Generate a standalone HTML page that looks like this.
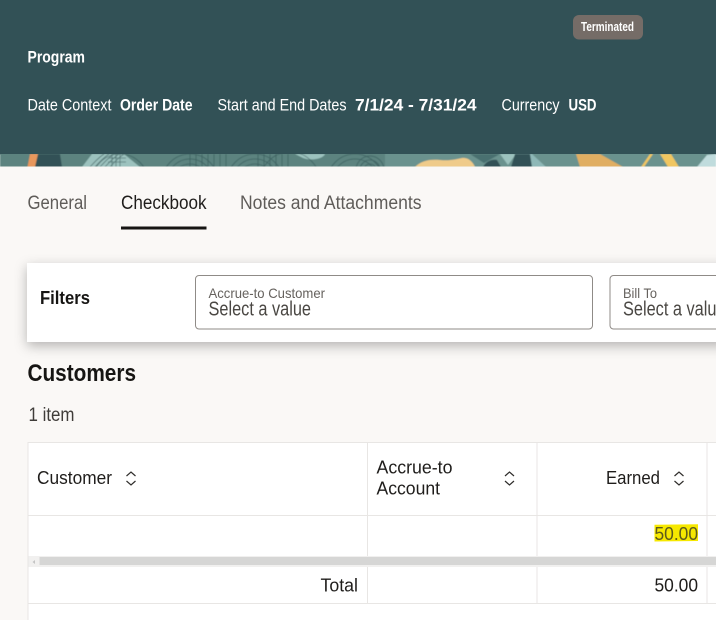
<!DOCTYPE html>
<html><head><meta charset="utf-8"><style>
html,body{margin:0;padding:0;width:716px;height:620px;overflow:hidden;background:#faf8f6}
svg{display:block}
text{font-family:"Liberation Sans",sans-serif}
.w{fill:#fff}
.t{fill:#1f1d1b;font-size:18px}
</style></head><body>
<svg width="716" height="620" viewBox="0 0 716 620" xmlns="http://www.w3.org/2000/svg">
<defs>
<filter id="s" x="-5%" y="-30%" width="110%" height="170%"><feDropShadow dx="0" dy="4" stdDeviation="6" flood-color="#000" flood-opacity=".28"/></filter>
<filter id="b"><feGaussianBlur stdDeviation=".45"/></filter>
<clipPath id="band"><rect x="0" y="154" width="716" height="12.500"/></clipPath>
</defs>
<rect width="716" height="620" fill="#faf8f6"/>
<rect width="716" height="154.500" fill="#325156"/>

<g clip-path="url(#band)"><g filter="url(#b)">
<rect y="152" width="716" height="17" fill="#5b837f"/>
<rect x="385" y="152" width="331" height="17" fill="#6b928e"/>
<path d="M30 154h8.500l-3 13h-8z" fill="#e8975c"/>
<path d="M38 154h22l2 13H35z" fill="#325156"/>
<path d="M92 154h32l16 13H82z" fill="#9cc2be"/>
<path d="M295 154h30c-2 5-14 7-22 4z" fill="#9cc2be"/>
<g fill="none" stroke="#2e4f50" stroke-width=".8" opacity=".65">
<path d="M90 167q8-9 14-13M95 167q8-9 14-13M100 167q8-9 14-13M105 167q8-9 14-13M110 167q8-9 14-13"/>
<path d="M112 154v13M116 154v13M120 154v13M108 158h18M108 162h18"/>
<circle cx="120" cy="182" r="28"/><circle cx="190" cy="182" r="28"/><circle cx="190" cy="182" r="23"/><circle cx="190" cy="182" r="18"/>
<circle cx="255" cy="182" r="28"/><circle cx="255" cy="182" r="23"/><circle cx="255" cy="182" r="18"/>
<circle cx="290" cy="182" r="30"/><circle cx="355" cy="182" r="28"/><circle cx="355" cy="182" r="23"/><circle cx="370" cy="170" r="14"/><circle cx="370" cy="170" r="10"/><circle cx="370" cy="170" r="6"/>
<path d="M190 154v13M196 154v13M202 154v13M208 154v13M214 154v13M220 154v13M226 154v13M258 154v13M264 154v13M270 154v13M276 154v13M282 154v13M288 154v13"/>
</g>
<path d="M415 167c6-6 14-8 25-7s16-1 22-2 11 4 13 9z" fill="#efcb8a"/>
<path d="M470 154h30l-16 9z" fill="#487070"/>
<path d="M483 167c3-6 9-8 14-7l4 7z" fill="#325156"/>
<path d="M500 154h16l-8 11z" fill="#9cc2be"/>
<path d="M515 154h15l4 13h-23z" fill="#325156"/>
<path d="M530 154h2l14 13h-14z" fill="#8eb8b7"/>
<path d="M576 154h24l23 13h-43z" fill="#e0ae62"/>
<path d="M650 154h3l-9 13h-3zM660 154h11l8 13h-11z" fill="#f0c661"/>
<path d="M716 154v13h-19l10-12z" fill="#c0dcdd"/>
</g></g>

<rect x="573" y="15" width="70" height="24.500" rx="6" fill="#756c67"/>
<text x="581" y="31" class="w" font-size="13" font-weight="700" textLength="53" lengthAdjust="spacingAndGlyphs">Terminated</text>
<text x="27.500" y="62.500" class="w" font-size="17" font-weight="700" textLength="57.500" lengthAdjust="spacingAndGlyphs">Program</text>
<g font-size="17">
<text x="27.500" y="110.500" class="w" textLength="84" lengthAdjust="spacingAndGlyphs">Date Context</text>
<text x="120" y="110.500" class="w" font-weight="700" textLength="72.500" lengthAdjust="spacingAndGlyphs">Order Date</text>
<text x="217.500" y="110.500" class="w" textLength="129" lengthAdjust="spacingAndGlyphs">Start and End Dates</text>
<text x="355" y="110.500" class="w" font-weight="700" textLength="121.500" lengthAdjust="spacingAndGlyphs">7/1/24 - 7/31/24</text>
<text x="501.500" y="110.500" class="w" textLength="58" lengthAdjust="spacingAndGlyphs">Currency</text>
<text x="568.500" y="110.500" class="w" font-weight="700" textLength="28" lengthAdjust="spacingAndGlyphs">USD</text>
</g>

<text x="27.500" y="209" font-size="19" fill="#5f5c59" textLength="59.500" lengthAdjust="spacingAndGlyphs">General</text>
<text x="121" y="209" font-size="19" fill="#1f1d1b" textLength="85.500" lengthAdjust="spacingAndGlyphs">Checkbook</text>
<text x="240" y="209" font-size="19" fill="#5f5c59" textLength="181.500" lengthAdjust="spacingAndGlyphs">Notes and Attachments</text>
<rect x="121" y="226.500" width="85.500" height="3" fill="#161513"/>

<rect x="27" y="263" width="700" height="79" fill="#fff" filter="url(#s)"/>
<text x="40" y="304" font-size="18" font-weight="700" fill="#161513" textLength="50" lengthAdjust="spacingAndGlyphs">Filters</text>
<rect x="195.500" y="275.500" width="397" height="53.500" rx="3.500" fill="#fff" stroke="#8f8b87"/>
<rect x="610" y="275.500" width="130" height="53.500" rx="3.500" fill="#fff" stroke="#8f8b87"/>
<text x="208.500" y="298" font-size="14" fill="#66625e" textLength="116.500" lengthAdjust="spacingAndGlyphs">Accrue-to Customer</text>
<text x="208.500" y="315.500" font-size="20" fill="#4a4743" textLength="102.500" lengthAdjust="spacingAndGlyphs">Select a value</text>
<text x="623" y="298" font-size="14" fill="#66625e" textLength="34" lengthAdjust="spacingAndGlyphs">Bill To</text>
<text x="623" y="315.500" font-size="20" fill="#4a4743" textLength="102.500" lengthAdjust="spacingAndGlyphs">Select a value</text>

<text x="27.500" y="381" font-size="24" font-weight="700" fill="#161513" textLength="108.500" lengthAdjust="spacingAndGlyphs">Customers</text>
<text x="28.500" y="421" font-size="19" fill="#3f3c39" textLength="46" lengthAdjust="spacingAndGlyphs">1 item</text>

<rect x="28" y="442.500" width="688" height="177.500" fill="#fff"/>
<g fill="#e8e6e4">
<rect x="28" y="442" width="688" height="1"/>
<rect x="28" y="515" width="688" height="1"/>
<rect x="28" y="603" width="688" height="1"/>
<rect x="27.500" y="442" width="1" height="178"/>
<rect x="367" y="442" width="1" height="114"/><rect x="536.500" y="442" width="1" height="114"/><rect x="706.500" y="442" width="1" height="114"/>
<rect x="367" y="567" width="1" height="36"/><rect x="536.500" y="567" width="1" height="36"/><rect x="706.500" y="567" width="1" height="36"/>
</g>
<rect x="28.500" y="556" width="688" height="11" fill="#f1f0ef"/>
<rect x="39.500" y="557" width="677" height="8" fill="#d6d6d5"/>
<path d="M35 560l-2.500 2 2.500 2z" fill="#c4c4c4"/>

<text x="37" y="484" class="t" textLength="75" lengthAdjust="spacingAndGlyphs">Customer</text>
<text x="376.500" y="473.500" class="t" textLength="76" lengthAdjust="spacingAndGlyphs">Accrue-to</text>
<text x="376.500" y="494.500" class="t" textLength="63.500" lengthAdjust="spacingAndGlyphs">Account</text>
<text x="606" y="484" class="t" textLength="54" lengthAdjust="spacingAndGlyphs">Earned</text>
<g fill="none" stroke="#2f2d2b" stroke-width="1.200">
<path d="M126.500 476l4.500-4 4.500 4M126.500 481l4.500 4 4.500-4"/>
<path d="M505 476l4.500-4 4.500 4M505 481l4.500 4 4.500-4"/>
<path d="M674.500 476l4.500-4 4.500 4M674.500 481l4.500 4 4.500-4"/>
</g>
<path d="M654.500 524.800L698 524.300V541L654.500 541.500z" fill="#f6e800"/>
<text x="654.500" y="540" font-size="18" fill="#5d5a1c" textLength="43.500" lengthAdjust="spacingAndGlyphs">50.00</text>
<text x="320.500" y="591.500" class="t" textLength="37.500" lengthAdjust="spacingAndGlyphs">Total</text>
<text x="654.500" y="591.500" class="t" textLength="43.500" lengthAdjust="spacingAndGlyphs">50.00</text>
</svg>
</body></html>
